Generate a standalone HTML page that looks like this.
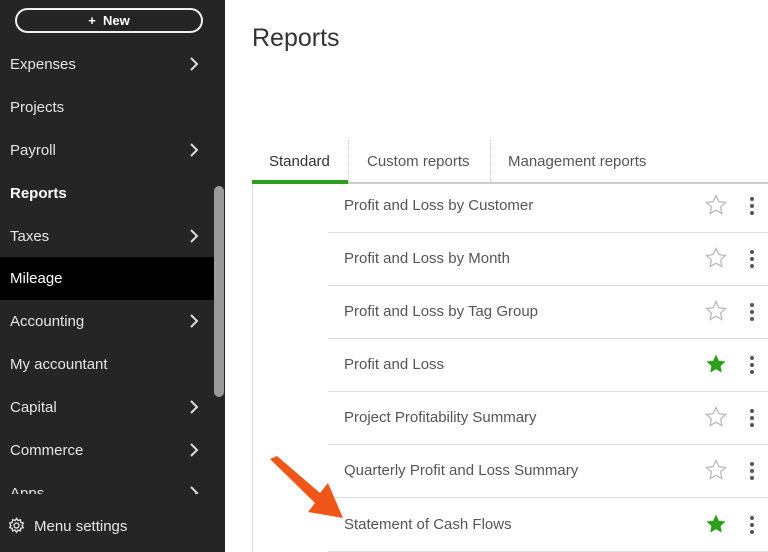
<!DOCTYPE html>
<html><head><style>
body{margin:0;width:768px;height:552px;overflow:hidden;font-family:"Liberation Sans",sans-serif;background:#fff;position:relative}
.sb{position:absolute;left:0;top:0;width:225px;height:552px;background:#252525}
.new{position:absolute;left:15px;top:8px;width:188px;height:25px;border:2px solid #eee;border-radius:14px;box-sizing:border-box;color:#fff;font-weight:bold;font-size:13px;text-align:center;line-height:21px}
.it{position:absolute;left:0;width:214px;height:43px;line-height:43px;color:#e6e6e6;font-size:15px;padding-left:10px;box-sizing:border-box}
.it svg{position:absolute;left:189px;top:14px}
.scroll{position:absolute;left:214px;top:186px;width:10px;height:211px;background:#9a9a9a;border-radius:5px}
.row{position:absolute;left:328px;width:440px;height:53px;border-bottom:1px solid #dcdcdc;box-sizing:border-box}
.row span{position:absolute;left:16px;top:17px;font-size:15px;color:#555}
.row svg.s{position:absolute;left:377px;top:14px}
.dots{position:absolute;left:422px;top:17px;width:4px}
.dots i{display:block;width:4px;height:4px;border-radius:2px;background:#555;margin-bottom:3px}
</style></head><body>
<div class="sb">
<div class="new">+&nbsp;&nbsp;New</div>
<div class="it" style="top:43px">Expenses<svg width="10" height="14"><path d="M2 1l6 6-6 6" stroke="#ddd" stroke-width="2" fill="none"/></svg></div>
<div class="it" style="top:86px">Projects</div>
<div class="it" style="top:129px">Payroll<svg width="10" height="14"><path d="M2 1l6 6-6 6" stroke="#ddd" stroke-width="2" fill="none"/></svg></div>
<div class="it" style="top:172px;font-weight:bold;color:#fff">Reports</div>
<div class="it" style="top:215px">Taxes<svg width="10" height="14"><path d="M2 1l6 6-6 6" stroke="#ddd" stroke-width="2" fill="none"/></svg></div>
<div class="it" style="top:257px;background:#000;color:#fff">Mileage</div>
<div class="it" style="top:300px">Accounting<svg width="10" height="14"><path d="M2 1l6 6-6 6" stroke="#ddd" stroke-width="2" fill="none"/></svg></div>
<div class="it" style="top:343px">My accountant</div>
<div class="it" style="top:386px">Capital<svg width="10" height="14"><path d="M2 1l6 6-6 6" stroke="#ddd" stroke-width="2" fill="none"/></svg></div>
<div class="it" style="top:429px">Commerce<svg width="10" height="14"><path d="M2 1l6 6-6 6" stroke="#ddd" stroke-width="2" fill="none"/></svg></div>
<div class="it" style="top:472px">Apps<svg width="10" height="14"><path d="M2 1l6 6-6 6" stroke="#ddd" stroke-width="2" fill="none"/></svg></div>
<div style="position:absolute;left:0;top:494px;width:214px;height:58px;background:#252525"></div>
<div class="it" style="top:505px;padding-left:34px">Menu settings</div>
<svg style="position:absolute;left:8px;top:517px" width="17" height="17" viewBox="0 0 24 24" fill="none" stroke="#ddd" stroke-width="2"><circle cx="12" cy="12" r="3.5"/><path d="M12 2l2 3 3.5-1 .5 3.5 3.5 1-1.5 3.5 1.5 3-3.5 1-.5 3.5-3.5-1-2 3-2-3-3.5 1-.5-3.5-3.5-1 1.5-3-1.5-3.5 3.5-1 .5-3.5 3.5 1z"/></svg>
<div class="scroll"></div>
</div>
<div style="position:absolute;left:252px;top:24px;font-size:25px;color:#333">Reports</div>
<div style="position:absolute;left:269px;top:153px;font-size:15px;color:#333">Standard</div>
<div style="position:absolute;left:367px;top:153px;font-size:15px;color:#555">Custom reports</div>
<div style="position:absolute;left:508px;top:153px;font-size:15px;color:#555">Management reports</div>
<div style="position:absolute;left:348px;top:140px;height:42px;border-left:1px dotted #ccc"></div>
<div style="position:absolute;left:490px;top:140px;height:42px;border-left:1px dotted #ccc"></div>
<div style="position:absolute;left:252px;top:182px;width:516px;height:2px;background:#ccc"></div>
<div style="position:absolute;left:252px;top:180px;width:96px;height:4px;background:#2ca01c"></div>
<div style="position:absolute;left:252px;top:184px;width:1px;height:368px;background:#ddd"></div>
<svg width="0" height="0" style="position:absolute"><defs><path id="st" d="M11 1.5l2.9 6.2 6.6.8-4.9 4.5 1.3 6.6-5.9-3.3-5.9 3.3 1.3-6.6L1.5 8.5l6.6-.8z"/></defs></svg>
<div class="row" style="top:180px"><span>Profit and Loss by Customer</span><svg class="s" width="22" height="22"><use href="#st" fill="none" stroke="#bbb" stroke-width="1.3"/></svg><div class="dots"><i></i><i></i><i></i></div></div>
<div class="row" style="top:233px"><span>Profit and Loss by Month</span><svg class="s" width="22" height="22"><use href="#st" fill="none" stroke="#bbb" stroke-width="1.3"/></svg><div class="dots"><i></i><i></i><i></i></div></div>
<div class="row" style="top:286px"><span>Profit and Loss by Tag Group</span><svg class="s" width="22" height="22"><use href="#st" fill="none" stroke="#bbb" stroke-width="1.3"/></svg><div class="dots"><i></i><i></i><i></i></div></div>
<div class="row" style="top:339px"><span>Profit and Loss</span><svg class="s" width="22" height="22"><use href="#st" fill="#2ca01c"/></svg><div class="dots"><i></i><i></i><i></i></div></div>
<div class="row" style="top:392px"><span>Project Profitability Summary</span><svg class="s" width="22" height="22"><use href="#st" fill="none" stroke="#bbb" stroke-width="1.3"/></svg><div class="dots"><i></i><i></i><i></i></div></div>
<div class="row" style="top:445px"><span>Quarterly Profit and Loss Summary</span><svg class="s" width="22" height="22"><use href="#st" fill="none" stroke="#bbb" stroke-width="1.3"/></svg><div class="dots"><i></i><i></i><i></i></div></div>
<div class="row" style="top:499px"><span>Statement of Cash Flows</span><svg class="s" width="22" height="22"><use href="#st" fill="#2ca01c"/></svg><div class="dots"><i></i><i></i><i></i></div></div>
<svg style="position:absolute;left:0;top:0" width="768" height="552"><path d="M270 459 L277 456 L320 493 L328 483 L343 518 L308 512 L315 503 Z" fill="#f0561a"/></svg>
</body></html>
